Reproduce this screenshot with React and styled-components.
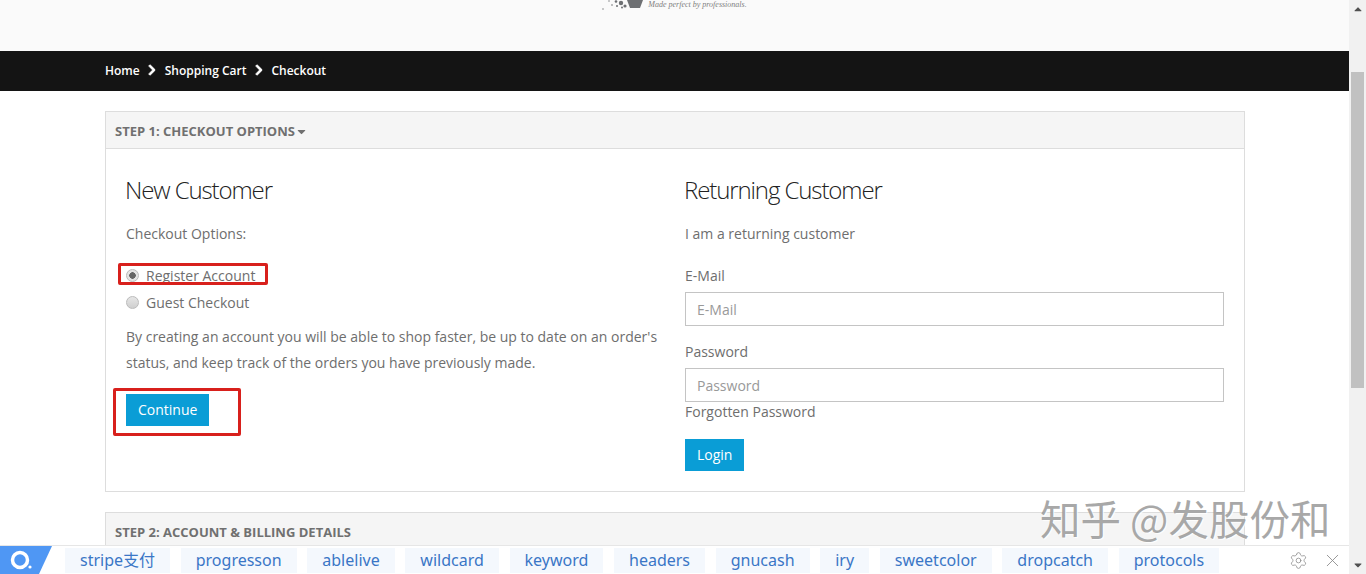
import React from "react";
import styled, { createGlobalStyle } from "styled-components";
import { FaChevronRight, FaCaretDown, FaCaretUp } from "react-icons/fa";
import { Settings, X } from "lucide-react";

const keywords = [
  "stripe支付",
  "progresson",
  "ablelive",
  "wildcard",
  "keyword",
  "headers",
  "gnucash",
  "iry",
  "sweetcolor",
  "dropcatch",
  "protocols"
];

const GlobalStyle = createGlobalStyle`
  html, body {
    margin: 0;
    height: 574px;
    overflow: hidden;
    background: #fff;
    font-family: "Open Sans", "Noto Sans CJK SC", sans-serif;
    font-size: 14px;
    color: #6e6e6e;
  }
  * { box-sizing: border-box; }
`;

const Screen = styled.div`
  position: relative;
  display: flex;
  width: 1366px;
  height: 574px;
  overflow: hidden;
`;

const Page = styled.div`
  flex: 1;
  min-width: 0;
`;

// ============ Header ============
const Header = styled.header`
  display: flex;
  justify-content: center;
  align-items: flex-start;
  gap: 5px;
  height: 51px;
  background-color: #fafafa;
`;

const LogoMark = styled.svg`
  display: block;
  width: 41px;
  height: 10px;
`;

const Slogan = styled.span`
  font-family: "Liberation Serif", serif;
  font-style: italic;
  font-size: 8px;
  line-height: 10px;
  color: #7f7f7f;
`;

const Breadcrumb = styled.nav`
  display: flex;
  align-items: center;
  gap: 6.5px;
  height: 40px;
  padding: 0 0 2px 105px;
  background-color: #141414;
  color: #fff;
  font-size: 12px;
  font-weight: 600;
  svg {
    font-size: 12px;
    stroke: currentColor;
    stroke-width: 40px;
  }
`;

// ============ Panels ============
const Content = styled.main`
  padding: 20px 104px 0 105px;
`;

const Panel = styled.section`
  margin-bottom: 20px;
  border: 1px solid #ddd;
  background: #fff;
`;

const PanelHeading = styled.div`
  display: flex;
  align-items: center;
  height: 37px;
  padding: 2px 0 0 9px;
  background-color: #f5f5f5;
  border-bottom: 1px solid #ddd;
  color: #707070;
  font-size: 13px;
  font-weight: 700;
`;

const PanelBody = styled.div`
  display: grid;
  grid-template-columns: 540px 539px;
  column-gap: 19px;
  height: 342px;
  padding: 26px 20px 0;
`;

const Column = styled.div`
  display: flex;
  flex-direction: column;
  align-items: flex-start;
`;

const Title = styled.h2`
  margin: 0 0 16px -1px;
  font-size: 24px;
  line-height: 30px;
  font-weight: 300;
  letter-spacing: -1.1px;
  color: #222;
`;

const Text = styled.p`
  margin: 0 0 ${({ $gap }) => $gap || 0}px;
  line-height: ${({ $height }) => $height || 26}px;
`;

const RadioRow = styled.label`
  position: relative;
  display: flex;
  align-items: center;
  gap: 7px;
  height: 27px;
  margin-bottom: ${({ $gap }) => $gap || 0}px;
`;

const Radio = styled.input.attrs({ type: "radio", name: "account" })`
  appearance: none;
  width: 13px;
  height: 13px;
  margin: 0;
  border: 1px solid #bbb;
  border-radius: 50%;
  background: ${({ defaultChecked }) =>
    defaultChecked
      ? "radial-gradient(circle, #666 0 3px, #e4e4e4 3.5px)"
      : "linear-gradient(#e6e6e6, #cfcfcf)"};
`;

const Highlight = styled.span`
  position: absolute;
  top: ${({ $top }) => $top}px;
  left: ${({ $left }) => $left}px;
  width: ${({ $width }) => $width}px;
  height: ${({ $height }) => $height}px;
  border: 3px solid #d8201c;
  border-radius: 2px;
  pointer-events: none;
`;

const ButtonWrap = styled.div`
  position: relative;
  margin-top: ${({ $top }) => $top}px;
`;

const Button = styled.button`
  display: block;
  height: 32px;
  padding: 0 12px 2px;
  border: 0;
  background-color: #0a9dd6;
  color: #fff;
  font-family: inherit;
  font-size: 14px;
`;

const Field = styled.label`
  display: block;
  width: 100%;
  line-height: 20px;
  margin-bottom: ${({ $gap }) => $gap}px;
`;

const Input = styled.input`
  display: block;
  width: 100%;
  height: 34px;
  margin-top: 6px;
  padding: 0 11px;
  border: 1px solid #c4c4c4;
  font-family: inherit;
  font-size: 14px;
  color: #666;
  &::placeholder {
    color: #999;
    opacity: 1;
  }
`;

// ============ Scrollbar ============
const Scrollbar = styled.div`
  display: flex;
  flex-direction: column;
  align-items: center;
  width: 17px;
  padding: 3px 0;
  background-color: #f1f1f1;
  color: #505050;
  font-size: 12px;
`;

const ScrollThumb = styled.div`
  width: 13px;
  height: 316px;
  margin: 57px 0 auto;
  background-color: #c1c1c1;
`;

// ============ Keyword bar ============
const KeywordBar = styled.div`
  position: absolute;
  left: 0;
  right: 17px;
  bottom: 0;
  display: flex;
  align-items: center;
  height: 29px;
  padding-right: 6px;
  background-color: #fff;
  border-top: 1px solid #e6e6e6;
`;

const BarLogo = styled.svg`
  display: block;
  flex: none;
  width: 52px;
  height: 28px;
  margin-right: 13px;
`;

const Tags = styled.div`
  display: flex;
  gap: 10.7px;
  flex: 1;
`;

const Tag = styled.span`
  height: 25px;
  padding: 0 15px;
  background-color: #f4f8fd;
  color: #3a76c6;
  font-family: "Noto Sans", "Noto Sans CJK SC", sans-serif;
  font-size: 16px;
  line-height: 25px;
`;

const BarAction = styled.span`
  display: flex;
  margin-left: ${({ $gap }) => $gap || 0}px;
  color: #8c8c8c;
`;

const Watermark = styled.div`
  position: absolute;
  top: 492px;
  left: 1040px;
  font-family: "Noto Sans CJK SC", sans-serif;
  font-size: 40.5px;
  line-height: 52px;
  white-space: nowrap;
  color: rgba(140, 140, 140, 0.75);
  text-shadow: 1px 1px 1px rgba(255, 255, 255, 0.9);
  pointer-events: none;
`;

const App = () => (
  <Screen>
    <GlobalStyle />
    <Page>
      <Header>
        <LogoMark viewBox="0 0 41 10">
          <path d="M25 0h16l-3 8H28z" fill="#6e7073" />
          <g fill="#6e7073">
            <circle cx="19" cy="3" r="2.2" />
            <circle cx="23" cy="6" r="1.6" />
            <circle cx="14" cy="1.5" r="1.3" />
            <circle cx="15" cy="6" r="1" />
            <circle cx="10" cy="5" r="0.8" />
            <circle cx="7" cy="1" r="0.7" />
            <circle cx="1" cy="9" r="0.7" />
            <circle cx="20" cy="7.5" r="1" />
          </g>
        </LogoMark>
        <Slogan>Made perfect by professionals.</Slogan>
      </Header>
      <Breadcrumb>
        <span>Home</span>
        <FaChevronRight />
        <span>Shopping Cart</span>
        <FaChevronRight />
        <span>Checkout</span>
      </Breadcrumb>
      <Content>
        <Panel>
          <PanelHeading>
            STEP 1: CHECKOUT OPTIONS
            <FaCaretDown />
          </PanelHeading>
          <PanelBody>
            <Column>
              <Title>New Customer</Title>
              <Text $gap={15}>Checkout Options:</Text>
              <RadioRow>
                <Radio defaultChecked />
                Register Account
                <Highlight $top={1} $left={-8} $width={150} $height={22} />
              </RadioRow>
              <RadioRow $gap={8}>
                <Radio />
                Guest Checkout
              </RadioRow>
              <Text>
                By creating an account you will be able to shop faster, be up to date on an
                order's status, and keep track of the orders you have previously made.
              </Text>
              <ButtonWrap $top={18}>
                <Button>Continue</Button>
                <Highlight $top={-6} $left={-13} $width={128} $height={48} />
              </ButtonWrap>
            </Column>
            <Column>
              <Title>Returning Customer</Title>
              <Text $gap={19}>I am a returning customer</Text>
              <Field $gap={16}>
                E-Mail
                <Input placeholder="E-Mail" />
              </Field>
              <Field $gap={0}>
                Password
                <Input placeholder="Password" />
              </Field>
              <Text $height={20}>Forgotten Password</Text>
              <ButtonWrap $top={17}>
                <Button>Login</Button>
              </ButtonWrap>
            </Column>
          </PanelBody>
        </Panel>
        <Panel>
          <PanelHeading>STEP 2: ACCOUNT &amp; BILLING DETAILS</PanelHeading>
        </Panel>
      </Content>
    </Page>
    <Scrollbar>
      <FaCaretUp />
      <ScrollThumb />
      <FaCaretDown />
    </Scrollbar>
    <Watermark>知乎 @发股份和</Watermark>
    <KeywordBar>
      <BarLogo viewBox="0 0 52 28">
        <path d="M0 0h52L39 28H0z" fill="#4f97f4" />
        <circle cx="20" cy="14" r="7.5" fill="none" stroke="#fff" strokeWidth="3.5" />
        <circle cx="30" cy="21" r="1.6" fill="#fff" />
      </BarLogo>
      <Tags>
        {keywords.map((word) => (
          <Tag key={word}>{word}</Tag>
        ))}
      </Tags>
      <BarAction>
        <Settings size={19} strokeWidth={1} />
      </BarAction>
      <BarAction $gap={14}>
        <X size={21} strokeWidth={1} />
      </BarAction>
    </KeywordBar>
  </Screen>
);

export default App;
